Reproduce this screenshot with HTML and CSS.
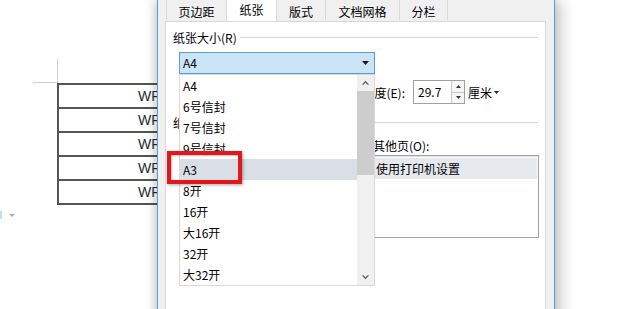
FILE: index.html
```html
<!DOCTYPE html>
<html lang="zh-CN">
<head>
<meta charset="utf-8">
<title>页面设置</title>
<link rel="stylesheet" href="styles.css">
</head>
<body>
<div class="screen">
  <div class="doc">
    <div class="corner"></div>
    <div class="doc-table">
      <div class="doc-row">WPS</div>
      <div class="doc-row">WPS</div>
      <div class="doc-row">WPS</div>
      <div class="doc-row">WPS</div>
      <div class="doc-row">WPS</div>
    </div>
    <div class="anchor"><span class="anchor-bar"></span><span class="anchor-tri"></span></div>
  </div>

  <div class="dialog">
    <div class="tabs">
      <div class="tab tab-first tab-w61">页边距</div>
      <div class="tab tab-active tab-w51">纸张</div>
      <div class="tab tab-w49">版式</div>
      <div class="tab tab-w74">文档网格</div>
      <div class="tab tab-w48">分栏</div>
    </div>
    <div class="panel">
      <div class="group-head"><span>纸张大小(R)</span><span class="rule"></span></div>
      <div class="group-body">
        <div class="combo-wrap">
          <div class="combo">
            <span>A4</span>
            <svg class="combo-arrow" width="7" height="4" viewBox="0 0 7 4"><path d="M0 0H7L3.5 4Z" fill="#1a1a1a"/></svg>
          </div>
          <div class="droplist">
            <div class="items">
              <div class="item">A4</div>
              <div class="item">6号信封</div>
              <div class="item">7号信封</div>
              <div class="item">9号信封</div>
              <div class="item item-hover">A3</div>
              <div class="item">8开</div>
              <div class="item">16开</div>
              <div class="item">大16开</div>
              <div class="item">32开</div>
              <div class="item">大32开</div>
            </div>
            <div class="scrollbar">
              <div class="sb-btn"><svg width="7" height="4" viewBox="0 0 7 4"><path d="M0.6 3.6L3.5 0.7L6.4 3.6" fill="none" stroke="#606060" stroke-width="1.3"/></svg></div>
              <div class="sb-thumb"></div>
              <div class="sb-track"></div>
              <div class="sb-btn"><svg width="7" height="4" viewBox="0 0 7 4"><path d="M0.6 0.4L3.5 3.3L6.4 0.4" fill="none" stroke="#606060" stroke-width="1.3"/></svg></div>
            </div>
            <div class="callout"></div>
          </div>
        </div>
        <div class="dim-row">
          <span class="dim-label">高度(E):</span>
          <div class="spin">
            <span class="spin-value">29.7</span>
            <div class="spin-btns">
              <span class="spin-btn"><svg width="5" height="3" viewBox="0 0 5 3"><path d="M0 3H5L2.5 0Z" fill="#333"/></svg></span>
              <span class="spin-btn"><svg width="5" height="3" viewBox="0 0 5 3"><path d="M0 0H5L2.5 3Z" fill="#333"/></svg></span>
            </div>
          </div>
          <span class="unit">厘米<svg width="5" height="3" viewBox="0 0 5 3"><path d="M0 0H5L2.5 3Z" fill="#222"/></svg></span>
        </div>
      </div>
      <div class="group-head head-source"><span class="head-short">纸</span><span class="rule"></span></div>
      <div class="group-body source">
        <div class="col">
          <div class="col-label"></div>
          <div class="listbox"></div>
        </div>
        <div class="col">
          <div class="col-label">其他页(O):</div>
          <div class="listbox">
            <div class="lb-item lb-sel">使用打印机设置</div>
          </div>
        </div>
      </div>
    </div>
  </div>
</div>
</body>
</html>
```
FILE: styles.css
```css
* { box-sizing: border-box; }
html, body { margin: 0; padding: 0; }
body {
  width: 620px;
  height: 309px;
  overflow: hidden;
  background: #fff;
  font-family: "Noto Sans CJK SC", "Microsoft YaHei", sans-serif;
  font-size: 12px;
  color: #000;
}
.screen { position: relative; width: 620px; height: 309px; overflow: hidden; }

/* document behind */
.doc { padding-top: 59px; }
.corner {
  margin-left: 33px;
  width: 25px;
  height: 24px;
  border-right: 1px solid #cfcfcf;
  border-bottom: 1px solid #cfcfcf;
}
.doc-table {
  margin-left: 57px;
  width: 220px;
  border-left: 2px solid #555;
  border-bottom: 2px solid #555;
}
.doc-row {
  height: 24px;
  border-top: 2px solid #555;
  padding-left: 79px;
  font-family: "Liberation Sans", Arial, sans-serif;
  font-size: 14px;
  line-height: 22px;
  color: #2b2b2b;
}
.anchor { display: flex; align-items: center; gap: 7px; margin-top: 6px; height: 8px; }
.anchor-bar { width: 2px; height: 8px; background: #c3dbf3; }
.anchor-tri {
  width: 0; height: 0;
  border-left: 3px solid transparent;
  border-right: 3px solid transparent;
  border-top: 3px solid #a8a8a8;
}

/* dialog */
.dialog {
  position: absolute;
  left: 157px;
  top: 0;
  width: 398px;
  height: 330px;
  background: #f0f0f0;
  border-left: 1px solid #5b9bd8;
  border-right: 1px solid #5b9bd8;
  padding: 0 8px 0 7px;
  box-shadow: 6px 0 14px rgba(0,0,0,0.22), -3px 0 9px rgba(0,0,0,0.16);
}
.tabs { display: flex; height: 21px; padding-left: 1px; }
.tab {
  height: 20px;
  padding-top: 4px;
  line-height: 16px;
  text-align: center;
  background: #f0f0f0;
  border-right: 1px solid #d9d9d9;
  white-space: nowrap;
}
.tab-first { border-left: 1px solid #d9d9d9; }
.tab-active {
  height: 21px;
  padding-top: 2px;
  margin-left: -1px;
  background: #fff;
  border-left: 1px solid #d9d9d9;
  position: relative;
  z-index: 1;
}
.tab-w61 { width: 61px; }
.tab-w51 { width: 51px; }
.tab-w49 { width: 49px; }
.tab-w74 { width: 74px; }
.tab-w48 { width: 48px; }

.panel {
  background: #fff;
  border: 1px solid #d9d9d9;
  height: 320px;
  padding: 8px 7px 0 7px;
}
.group-head { display: flex; align-items: center; gap: 3px; height: 16px; line-height: 16px; white-space: nowrap; }
.rule { flex: 1; height: 1px; background: #d5d5d5; margin-top: -1px; }
.head-short { width: 48px; }
.group-body { margin-left: 6px; }
.head-source { margin-top: 11px; }

/* combo */
.combo-wrap { position: relative; margin-top: 6px; width: 196px; }
.combo {
  height: 22px;
  display: flex;
  align-items: center;
  justify-content: space-between;
  padding: 0 5px 0 3px;
  background: #cce4f7;
  border: 1px solid #569de5;
  line-height: 20px;
}
.droplist {
  position: absolute;
  left: 0;
  top: 22px;
  width: 196px;
  height: 212px;
  border: 1px solid #d9d9d9;
  background: #fff;
  display: flex;
  z-index: 5;
}
.items { flex: 1; }
.item { height: 21px; line-height: 21px; padding-left: 3px; white-space: nowrap; }
.item-hover { background: #dadfe6; }
.scrollbar { width: 17px; background: #f0f0f0; display: flex; flex-direction: column; }
.sb-btn { height: 16px; display: flex; align-items: center; justify-content: center; }
.sb-btn svg { display: block; }
.sb-thumb { height: 84px; background: #cdcdcd; }
.sb-track { flex: 1; }
.callout {
  position: absolute;
  left: -13px;
  top: 76px;
  width: 75px;
  height: 33px;
  border: 4px solid #e3161c;
  box-shadow: 1px 1px 3px rgba(0,0,0,0.35), inset 1px 1px 2px rgba(0,0,0,0.25);
}

/* height row */
.dim-row { display: flex; align-items: center; margin-top: 6px; height: 24px; }
.dim-label { width: 226px; text-align: right; white-space: nowrap; }
.spin {
  margin-left: 8px;
  width: 52px;
  height: 24px;
  border: 1px solid #a0a0a0;
  display: flex;
}
.spin-value { flex: 1; padding-left: 4px; line-height: 22px; }
.spin-btns { width: 13px; display: flex; flex-direction: column; border-left: 1px solid #c8c8c8; }
.spin-btn { flex: 1; display: flex; align-items: center; justify-content: center; background: #f5f5f5; }
.spin-btn + .spin-btn { border-top: 1px solid #c8c8c8; }
.spin-btn svg { display: block; }
.unit { margin-left: 3px; display: flex; align-items: center; gap: 2px; white-space: nowrap; }

/* paper source */
.source { display: grid; grid-template-columns: 186px 166px; column-gap: 8px; margin-top: 7px; }
.col-label { height: 16px; line-height: 16px; white-space: nowrap; }
.listbox {
  margin-top: 1px;
  height: 83px;
  border: 1px solid #a0a0a0;
  box-shadow: inset 1px 1px 0 #e3e3e3;
  padding: 2px 1px;
  background: #fff;
}
.lb-item { height: 21px; line-height: 21px; padding-left: 1px; white-space: nowrap; }
.lb-sel { background: #e6e9ee; }
```
